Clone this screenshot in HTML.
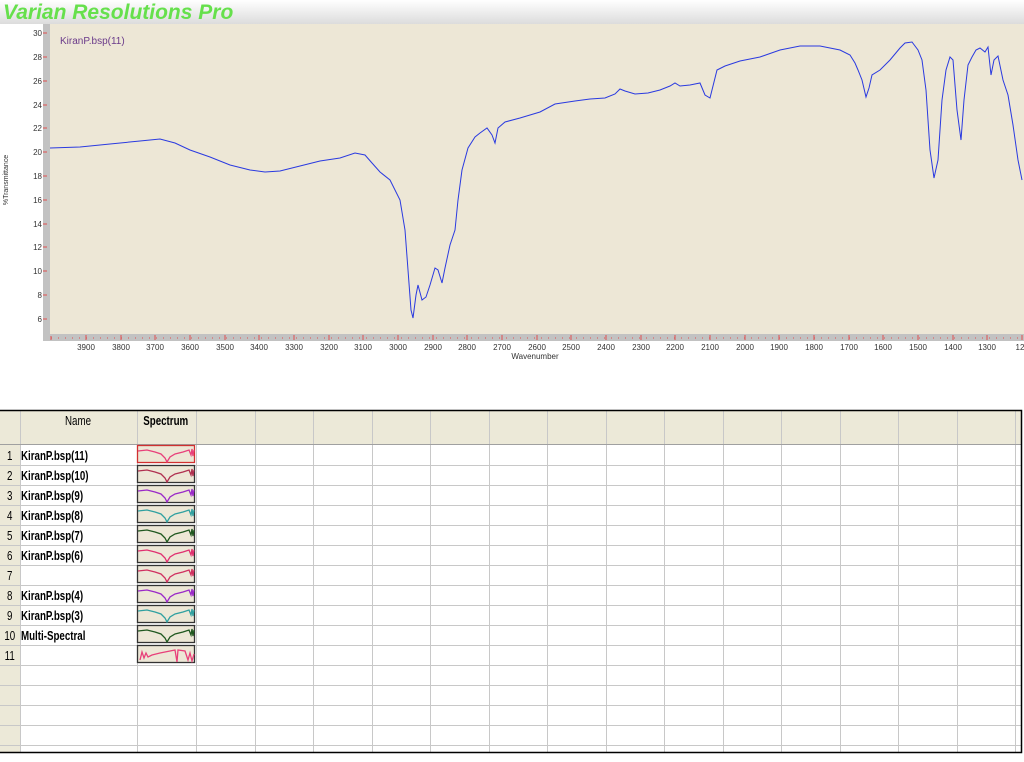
<!DOCTYPE html>
<html><head><meta charset="utf-8"><style>
html,body{margin:0;padding:0;background:#fff;width:1024px;height:762px;overflow:hidden}
svg{display:block}
text{font-family:"Liberation Sans",sans-serif}
.nm{font-family:"Liberation Sans",sans-serif;font-size:13px;fill:#000}
.tk{font-size:8px;fill:#333}
</style></head><body>
<svg width="1024" height="762" viewBox="0 0 1024 762">
<defs>
<linearGradient id="tb" x1="0" y1="0" x2="0" y2="1"><stop offset="0" stop-color="#ffffff"/><stop offset="1" stop-color="#dcdcdc"/></linearGradient>
<path id="th" d="M1,5 L10,4 L18,6 L24,8 L28,12 L30,16 L33,11 L38,8 L46,6 L52,4 L54,9 L55,3 L56,10 L57,4" fill="none"/>
</defs>
<rect x="0" y="0" width="1024" height="24" fill="url(#tb)"/>
<text x="3" y="19" font-size="21" font-weight="bold" font-style="italic" fill="#66e04c">Varian Resolutions Pro</text>
<rect x="43" y="24" width="981" height="317" fill="#c2c2c2"/>
<rect x="50" y="24" width="974" height="310" fill="#ede7d6"/>
<text x="60" y="44" font-size="10" fill="#6a3a8a">KiranP.bsp(11)</text>
<text transform="translate(8,180) rotate(-90)" font-size="7" fill="#333" text-anchor="middle">%Transmittance</text>
<g class="tk" text-anchor="end">
<text x="42" y="36">30</text><text x="42" y="60">28</text><text x="42" y="84">26</text><text x="42" y="108">24</text><text x="42" y="131">22</text><text x="42" y="155">20</text><text x="42" y="179">18</text><text x="42" y="203">16</text><text x="42" y="227">14</text><text x="42" y="250">12</text><text x="42" y="274">10</text><text x="42" y="298">8</text><text x="42" y="322">6</text>
</g>
<path stroke="#e05050" d="M43,33h4M43,57h4M43,81h4M43,105h4M43,128h4M43,152h4M43,176h4M43,200h4M43,224h4M43,247h4M43,271h4M43,295h4M43,319h4"/>
<path stroke="#e05050" d="M51,336v4M86,335v5M121,335v5M155,335v5M190,335v5M225,335v5M259,335v5M294,335v5M329,335v5M363,335v5M398,335v5M433,335v5M467,335v5M502,335v5M537,335v5M571,335v5M606,335v5M641,335v5M675,335v5M710,335v5M745,335v5M779,335v5M814,335v5M849,335v5M883,335v5M918,335v5M953,335v5M987,335v5M1022,335v5" />
<path stroke="#e05050" stroke-dasharray="1 6" d="M51,338H1024"/>
<g class="tk" text-anchor="middle">
<text x="86" y="350">3900</text><text x="121" y="350">3800</text><text x="155" y="350">3700</text><text x="190" y="350">3600</text><text x="225" y="350">3500</text><text x="259" y="350">3400</text><text x="294" y="350">3300</text><text x="329" y="350">3200</text><text x="363" y="350">3100</text><text x="398" y="350">3000</text><text x="433" y="350">2900</text><text x="467" y="350">2800</text><text x="502" y="350">2700</text><text x="537" y="350">2600</text><text x="571" y="350">2500</text><text x="606" y="350">2400</text><text x="641" y="350">2300</text><text x="675" y="350">2200</text><text x="710" y="350">2100</text><text x="745" y="350">2000</text><text x="779" y="350">1900</text><text x="814" y="350">1800</text><text x="849" y="350">1700</text><text x="883" y="350">1600</text><text x="918" y="350">1500</text><text x="953" y="350">1400</text><text x="987" y="350">1300</text><text x="1020" y="350">12</text>
<text x="535" y="359">Wavenumber</text>
</g>
<polyline fill="none" stroke="#2a3ae0" stroke-width="1" points="50,148 80,147 110,144 140,141 160,139 175,143 190,150 210,157 230,165 250,170 265,172 280,171 300,166 320,161 340,158 355,153 365,155 372,163 380,172 390,180 400,200 405,230 408,270 411,310 413,318 416,295 418,285 422,300 426,297 430,285 435,268 438,270 442,283 445,268 450,245 455,230 458,200 462,170 468,148 475,137 480,133 487,128 492,135 495,143 498,128 505,122 520,118 540,112 555,104 575,101 590,99 605,98 615,94 620,89 625,91 635,94 648,93 660,90 670,86 675,83 680,86 690,85 700,83 705,95 710,98 712,90 717,70 725,66 740,61 760,57 780,50 800,46 820,46 840,50 850,55 855,63 858,70 862,80 866,97 869,88 872,75 880,70 890,60 900,48 905,43 912,42 918,50 922,60 926,90 930,150 934,178 938,160 942,100 946,70 950,57 953,60 957,110 961,140 964,100 968,65 972,57 976,50 980,48 985,52 988,47 991,75 994,60 998,56 1003,80 1008,95 1013,125 1018,160 1022,180"/>
<rect x="0" y="411" width="1022" height="34" fill="#ece9d8"/>
<rect x="0" y="445" width="20" height="308" fill="#ece9d8"/>
<g stroke="#c8c8c8" stroke-width="1">
<path d="M0,465.5H1022M0,485.5H1022M0,505.5H1022M0,525.5H1022M0,545.5H1022M0,565.5H1022M0,585.5H1022M0,605.5H1022M0,625.5H1022M0,645.5H1022M0,665.5H1022M0,685.5H1022M0,705.5H1022M0,725.5H1022M0,745.5H1022"/>
<path d="M20.5,411V753M137.5,411V753M196.5,411V753M255.5,411V753M313.5,411V753M372.5,411V753M430.5,411V753M489.5,411V753M547.5,411V753M606.5,411V753M664.5,411V753M723.5,411V753M781.5,411V753M840.5,411V753M898.5,411V753M957.5,411V753M1015.5,411V753"/>
</g>
<path d="M0,444.5H1022" stroke="#a0a0a0"/>
<path d="M0,410.5H1021.5V752.5H0" fill="none" stroke="#000" stroke-width="1.5"/>
<g transform="scale(0.75 1)">
<text x="104" y="425" class="nm" text-anchor="middle" fill="#333">Name</text>
<text x="221" y="425" class="nm" font-weight="bold" text-anchor="middle">Spectrum</text>
<g class="nm" text-anchor="middle" fill="#222">
<text x="13" y="460">1</text><text x="13" y="480">2</text><text x="13" y="500">3</text><text x="13" y="520">4</text><text x="13" y="540">5</text><text x="13" y="560">6</text><text x="13" y="580">7</text><text x="13" y="600">8</text><text x="13" y="620">9</text><text x="13" y="640">10</text><text x="13" y="660">11</text>
</g>
<g class="nm" font-weight="bold">
<text x="28" y="460">KiranP.bsp(11)</text><text x="28" y="480">KiranP.bsp(10)</text><text x="28" y="500">KiranP.bsp(9)</text><text x="28" y="520">KiranP.bsp(8)</text><text x="28" y="540">KiranP.bsp(7)</text><text x="28" y="560">KiranP.bsp(6)</text><text x="28" y="600">KiranP.bsp(4)</text><text x="28" y="620">KiranP.bsp(3)</text><text x="28" y="640">Multi-Spectral</text>
</g>
</g>
<g stroke-width="1.3">
<rect x="137.5" y="445.5" width="57" height="17" fill="#ede7d6" stroke="#d03030"/><use href="#th" x="137" y="446" stroke="#e8407a"/>
<rect x="137.5" y="465.5" width="57" height="17" fill="#ede7d6" stroke="#333"/><use href="#th" x="137" y="466" stroke="#b03050"/>
<rect x="137.5" y="485.5" width="57" height="17" fill="#ede7d6" stroke="#333"/><use href="#th" x="137" y="486" stroke="#9a28c8"/>
<rect x="137.5" y="505.5" width="57" height="17" fill="#ede7d6" stroke="#333"/><use href="#th" x="137" y="506" stroke="#30a0a0"/>
<rect x="137.5" y="525.5" width="57" height="17" fill="#ede7d6" stroke="#333"/><use href="#th" x="137" y="526" stroke="#205820"/>
<rect x="137.5" y="545.5" width="57" height="17" fill="#ede7d6" stroke="#333"/><use href="#th" x="137" y="546" stroke="#e03070"/>
<rect x="137.5" y="565.5" width="57" height="17" fill="#ede7d6" stroke="#333"/><use href="#th" x="137" y="566" stroke="#d03060"/>
<rect x="137.5" y="585.5" width="57" height="17" fill="#ede7d6" stroke="#333"/><use href="#th" x="137" y="586" stroke="#9a28c8"/>
<rect x="137.5" y="605.5" width="57" height="17" fill="#ede7d6" stroke="#333"/><use href="#th" x="137" y="606" stroke="#30a0a0"/>
<rect x="137.5" y="625.5" width="57" height="17" fill="#ede7d6" stroke="#333"/><use href="#th" x="137" y="626" stroke="#205820"/>
<rect x="137.5" y="645.5" width="57" height="17" fill="#ede7d6" stroke="#333"/>
<path d="M140,660 L142,652 L144,658 L146,653 L148,657 L152,655 L160,653 L170,651 L175,650 L177,662 L178,650 L185,651 L188,660 L190,653 L192,661 L194,654" fill="none" stroke="#e8407a"/>
</g>
</svg>
</body></html>
